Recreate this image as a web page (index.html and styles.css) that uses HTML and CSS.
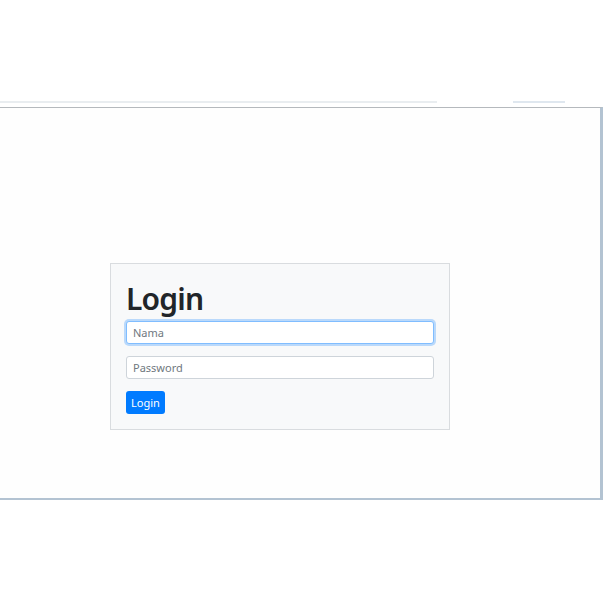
FILE: index.html
```html
<!DOCTYPE html>
<html lang="en">
<head>
    <meta charset="UTF-8">
    <meta name="viewport" content="width=device-width, initial-scale=1.0">
    <title>Login</title>
    <link rel="stylesheet" href="styles.css">
</head>
<body>
    <div class="tabstrip">
        <div class="tab tab-main"></div>
        <div class="tab tab-side"></div>
    </div>

    <div class="frame">
        <!-- Form login -->
        <div class="card">
            <h1>Login</h1>
            <form class="login-form">
                <input type="text" class="field focused" placeholder="Nama">
                <input type="password" class="field" placeholder="Password">
                <button type="button" class="btn">Login</button>
            </form>
        </div>
    </div>
</body>
</html>
```

FILE: styles.css
```css
body {
    margin: 0;
    background-color: #fff;
    font-family: "Noto Sans", "Open Sans", sans-serif;
    color: #212529;
}
.tabstrip {
    display: flex;
    height: 7px;
    padding-top: 100px;
}
.tab {
    height: 2px;
    margin-top: 1px;
    background-color: #e9edf0;
}
.tab-main {
    width: 437px;
}
.tab-side {
    width: 52px;
    margin-left: 76px;
    background-color: #dfe7ef;
}
.frame {
    width: 603px;
    height: 393px;
    box-sizing: border-box;
    border-top: 1px solid #b5b9bd;
    border-right: 3px solid #b3c3d2;
    border-bottom: 2px solid #b3c3d2;
    background-color: #fefefe;
    padding-top: 155px;
}
.card {
    width: 308px;
    margin-left: 110px;
    padding: 15px;
    background-color: #f8f9fa;
    border: 1px solid #d9dcdf;
}
h1 {
    margin: 0 0 2px 0;
    font-size: 30px;
    font-weight: 600;
    letter-spacing: -0.8px;
    line-height: 40px;
}
.login-form {
    display: flex;
    flex-direction: column;
    align-items: flex-start;
}
.field {
    width: 100%;
    height: 23px;
    box-sizing: border-box;
    margin-bottom: 12px;
    padding: 0 6px;
    font-family: inherit;
    font-size: 11px;
    border: 1px solid #ced4da;
    border-radius: 3px;
    background-color: #fff;
    outline: none;
}
.field::placeholder {
    color: #707880;
}
.field.focused {
    border-color: #80bdff;
    box-shadow: 0 0 0 2px rgba(0, 123, 255, 0.25);
}
.btn {
    height: 23px;
    padding: 0 5px;
    font-family: inherit;
    font-size: 11px;
    color: #fff;
    background-color: #007bff;
    border: none;
    border-radius: 3px;
}
```
